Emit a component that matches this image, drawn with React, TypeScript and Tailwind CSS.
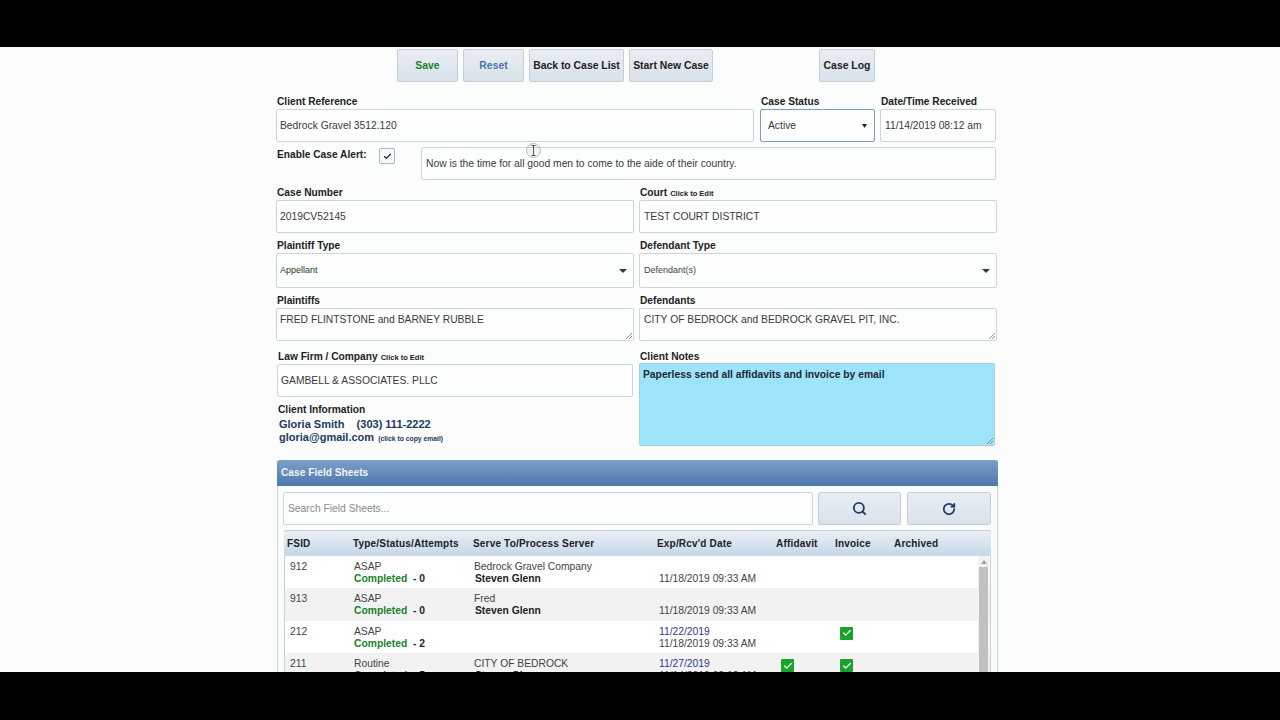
import { Check, RotateCw, Search } from "lucide-react";
import type { ReactNode } from "react";

const Label = ({ children, hint }: { children: ReactNode; hint?: string }) => (
  <div className="h-[13px] text-[10.2px] leading-[13px] font-bold text-[#222] whitespace-nowrap">
    {children}
    {hint && <span className="ml-[3px] text-[7.5px]">{hint}</span>}
  </div>
);

const Field = ({ children, className = "" }: { children?: ReactNode; className?: string }) => (
  <div className={`flex items-center border border-[#ccd5dc] rounded-[2px] bg-[#fdfefe] px-[4px] pt-[1px] text-[10.3px] text-[#3a3a3a] whitespace-nowrap ${className}`}>
    {children}
  </div>
);

const Caret = () => (
  <svg width="8" height="4" viewBox="0 0 8 4" className="ml-auto mr-[2px]">
    <path d="M0 0h8L4 4z" fill="#2d3a4a" />
  </svg>
);

const Grip = () => (
  <svg width="7" height="7" viewBox="0 0 7 7" className="absolute right-[1px] bottom-[1px]">
    <path d="M1 7L7 1M4 7l3-3" stroke="#777" strokeWidth="0.8" />
  </svg>
);

const TopButton = ({ children, className }: { children: ReactNode; className: string }) => (
  <button className={`h-[33px] rounded-[2px] border border-[#c3d0da] bg-gradient-to-b from-[#e8edf2] to-[#d9e2ea] text-[10.4px] font-bold whitespace-nowrap ${className}`}>
    {children}
  </button>
);

const GreenCheck = () => (
  <div className="flex items-center justify-center w-[13px] h-[13px] rounded-[1px] bg-[#1aa32c]">
    <Check className="w-[10px] h-[10px] text-white" strokeWidth={3} />
  </div>
);

type Sheet = {
  id: string;
  type: string;
  attempts: string;
  status: string;
  serve: string;
  server: string;
  exp: string;
  rcvd: string;
  affidavit: boolean;
  invoice: boolean;
};

const sheets: Sheet[] = [
  { id: "912", type: "ASAP", status: "Completed", attempts: "0", serve: "Bedrock Gravel Company", server: "Steven Glenn", exp: "", rcvd: "11/18/2019 09:33 AM", affidavit: false, invoice: false },
  { id: "913", type: "ASAP", status: "Completed", attempts: "0", serve: "Fred", server: "Steven Glenn", exp: "", rcvd: "11/18/2019 09:33 AM", affidavit: false, invoice: false },
  { id: "212", type: "ASAP", status: "Completed", attempts: "2", serve: "", server: "", exp: "11/22/2019", rcvd: "11/18/2019 09:33 AM", affidavit: false, invoice: true },
  { id: "211", type: "Routine", status: "Completed", attempts: "5", serve: "CITY OF BEDROCK", server: "Steven Glenn", exp: "11/27/2019", rcvd: "11/14/2019 08:12 AM", affidavit: true, invoice: true },
];

const cols = "grid grid-cols-[66px_120px_184px_119px_59px_59px_1fr]";

export default function App() {
  return (
    <div className="h-[720px] bg-black flex flex-col overflow-hidden font-['Liberation_Sans',Arial,sans-serif]">
      <div className="h-[47px] shrink-0" />
      <div className="relative h-[625px] shrink-0 bg-[#fbfcfc] overflow-hidden">
        <div className="ml-[276px] w-[722px] pt-[2px]">
          {/* top actions */}
          <div className="flex ml-[121px] h-[33px]">
            <TopButton className="w-[61px] text-[#1a7f2c]">Save</TopButton>
            <TopButton className="w-[61px] ml-[5px] text-[#4a76a8]">Reset</TopButton>
            <TopButton className="w-[95px] ml-[5px] text-[#222]">Back to Case List</TopButton>
            <TopButton className="w-[84px] ml-[5px] text-[#222]">Start New Case</TopButton>
            <TopButton className="w-[56px] ml-[106px] text-[#222]">Case Log</TopButton>
          </div>

          {/* reference row */}
          <div className="flex mt-[13px]">
            <div className="w-[478px]">
              <div className="pl-[1px]"><Label>Client Reference</Label></div>
              <Field className="h-[33px] mt-[1px] !pl-[3px]">Bedrock Gravel 3512.120</Field>
            </div>
            <div className="w-[115px] ml-[6px]">
              <div className="pl-[1px]"><Label>Case Status</Label></div>
              <Field className="h-[33px] mt-[1px] !border-[#6fa3b5] !px-[7px]">
                Active
                <svg width="5" height="4" viewBox="0 0 5 4" className="ml-auto">
                  <path d="M0 0h5L2.5 4z" fill="#222" />
                </svg>
              </Field>
            </div>
            <div className="w-[116px] ml-[5px]">
              <div className="pl-[1px]"><Label>Date/Time Received</Label></div>
              <Field className="h-[33px] mt-[1px]">11/14/2019 08:12 am</Field>
            </div>
          </div>

          {/* alert row */}
          <div className="flex mt-[5px]">
            <div className="w-[103px] pl-[1px] pt-[1px]"><Label>Enable Case Alert:</Label></div>
            <div className="flex items-center justify-center w-[16px] h-[16px] mt-[1px] rounded-[2px] border border-[#a9b8c4] bg-[#f6f8fa]">
              <Check className="w-[9px] h-[9px] text-[#223]" strokeWidth={3} />
            </div>
            <Field className="w-[575px] h-[33px] ml-[26px]">Now is the time for all good men to come to the aide of their country.</Field>
          </div>

          {/* case number / court */}
          <div className="grid grid-cols-[358px_358px] gap-x-[5px] mt-[6px]">
            <div>
              <div className="pl-[1px]"><Label>Case Number</Label></div>
              <Field className="h-[33px] mt-[1px] !pl-[3px]">2019CV52145</Field>
            </div>
            <div>
              <div className="pl-[1px]"><Label hint="Click to Edit">Court</Label></div>
              <Field className="h-[33px] mt-[1px]">TEST COURT DISTRICT</Field>
            </div>
          </div>

          {/* party types */}
          <div className="grid grid-cols-[358px_358px] gap-x-[5px] mt-[6px]">
            <div>
              <div className="pl-[1px]"><Label>Plaintiff Type</Label></div>
              <Field className="h-[35px] mt-[1px] !pl-[3px] !text-[9px] !text-[#28401f]">Appellant<Caret /></Field>
            </div>
            <div>
              <div className="pl-[1px]"><Label>Defendant Type</Label></div>
              <Field className="h-[35px] mt-[1px] !text-[9px] !text-[#444]">Defendant(s)<Caret /></Field>
            </div>
          </div>

          {/* parties */}
          <div className="grid grid-cols-[358px_358px] gap-x-[5px] mt-[6px]">
            <div>
              <div className="pl-[1px]"><Label>Plaintiffs</Label></div>
              <Field className="relative h-[33px] mt-[1px] !items-start !pt-[3px] !pl-[3px]">FRED FLINTSTONE and BARNEY RUBBLE<Grip /></Field>
            </div>
            <div>
              <div className="pl-[1px]"><Label>Defendants</Label></div>
              <Field className="relative h-[33px] mt-[1px] !items-start !pt-[3px]">CITY OF BEDROCK and BEDROCK GRAVEL PIT, INC.<Grip /></Field>
            </div>
          </div>

          {/* firm, client info, notes */}
          <div className="flex mt-[9px]">
            <div className="w-[363px] pl-[1px]">
              <div className="pl-[1px]"><Label hint="Click to Edit">Law Firm / Company</Label></div>
              <Field className="h-[33px] w-[356px] mt-[1px] !pl-[3px]">GAMBELL &amp; ASSOCIATES. PLLC</Field>
              <div className="mt-[6px] pl-[1px]"><Label>Client Information</Label></div>
              <div className="mt-[2px] pl-[2px] text-[11px] leading-[13px] font-bold text-[#24395f] whitespace-pre">Gloria Smith    (303) 111-2222</div>
              <div className="pl-[2px] text-[11px] leading-[13px] font-bold text-[#24395f] whitespace-nowrap">
                gloria@gmail.com <span className="ml-[1px] text-[6.8px]">(click to copy email)</span>
              </div>
            </div>
            <div className="w-[356px]">
              <div className="pl-[1px]"><Label>Client Notes</Label></div>
              <div className="relative h-[83px] rounded-[2px] border border-[#a8cfdd] bg-[#9de3fa] px-[3px] pt-[3px] text-[10.3px] font-bold text-[#1d2733]">
                Paperless send all affidavits and invoice by email
                <Grip />
              </div>
            </div>
          </div>

          {/* field sheets panel */}
          <div className="mt-[14px] ml-[1px] w-[721px] rounded-t-[3px] border-x border-[#c8d6e2]">
            <div className="-mx-px flex items-center h-[26px] px-[4px] rounded-t-[3px] bg-gradient-to-b from-[#7d9fc8] to-[#4c78ae] text-[10.2px] font-bold text-[#eef3f8]">
              Case Field Sheets
            </div>
            <div className="pl-[5px] pr-[6px] pt-[6px]">
              <div className="flex h-[33px]">
                <Field className="w-[530px] !text-[#8a8a8a]">Search Field Sheets...</Field>
                <button className="flex items-center justify-center w-[83px] ml-[5px] rounded-[2px] border border-[#c3d0da] bg-gradient-to-b from-[#e8edf2] to-[#d9e2ea]">
                  <Search className="w-[15px] h-[15px] text-[#1f3a63]" strokeWidth={3} />
                </button>
                <button className="flex items-center justify-center w-[84px] ml-[6px] rounded-[2px] border border-[#c3d0da] bg-gradient-to-b from-[#e8edf2] to-[#d9e2ea]">
                  <RotateCw className="w-[14px] h-[14px] text-[#1f3a63]" strokeWidth={3} />
                </button>
              </div>

              <div className="mt-[5px] ml-[1px] w-[707px] rounded-t-[3px] border-x border-[#c3d0da]">
                <div className={`${cols} -mx-px h-[26px] items-center rounded-t-[3px] border-t border-[#c3d0da] bg-gradient-to-b from-[#e9eff5] to-[#c6d7e8] text-[10px] font-bold text-[#222] tracking-[0.18px] [&>div]:pl-[3px]`}>
                  <div>FSID</div>
                  <div>Type/Status/Attempts</div>
                  <div>Serve To/Process Server</div>
                  <div>Exp/Rcv'd Date</div>
                  <div>Affidavit</div>
                  <div>Invoice</div>
                  <div>Archived</div>
                </div>
                <div className="relative">
                  {sheets.map((s, i) => (
                    <div key={s.id} className={`${cols} h-[32.4px] pt-[5px] text-[10.3px] leading-[12px] text-[#444] ${i % 2 ? "bg-[#f2f2f2]" : "bg-white"}`}>
                      <div className="pl-[5px]">{s.id}</div>
                      <div className="pl-[3px]">
                        <div>{s.type}</div>
                        <div className="font-bold">
                          <span className="text-[#1a7f2c]">{s.status}</span>
                          <span className="text-[#222]"> &nbsp;- {s.attempts}</span>
                        </div>
                      </div>
                      <div className="pl-[3px]">
                        <div className="h-[12px]">{s.serve}</div>
                        <div className="pl-[1px] font-bold text-[#222]">{s.server}</div>
                      </div>
                      <div className="pl-[4px]">
                        <div className="h-[12px] text-[#2d3a8c]">{s.exp}</div>
                        <div>{s.rcvd}</div>
                      </div>
                      <div className="pl-[7px] pt-[1px]">{s.affidavit && <GreenCheck />}</div>
                      <div className="pl-[7px] pt-[1px]">{s.invoice && <GreenCheck />}</div>
                      <div />
                    </div>
                  ))}
                  {/* scrollbar */}
                  <div className="absolute right-[1px] top-0 bottom-0 w-[11px] bg-[#f1f1f1] flex flex-col items-center">
                    <svg width="6" height="4" viewBox="0 0 6 4" className="mt-[4px]">
                      <path d="M0 4L3 0l3 4z" fill="#a3a3a3" />
                    </svg>
                    <div className="mt-[3px] w-[9px] flex-1 bg-[#c1c1c1]" />
                  </div>
                </div>
              </div>
            </div>
          </div>
        </div>

        {/* mouse cursor highlight */}
        <div className="absolute left-[526px] top-[96px] flex items-center justify-center w-[15px] h-[15px] rounded-full border border-[#bbb] bg-[#0000000d]">
          <svg width="5" height="11" viewBox="0 0 5 11">
            <path d="M0.5 0.5h4M2.5 0.5v10M0.5 10.5h4" stroke="#333" strokeWidth="0.8" fill="none" />
          </svg>
        </div>
      </div>
      <div className="flex-1" />
    </div>
  );
}
